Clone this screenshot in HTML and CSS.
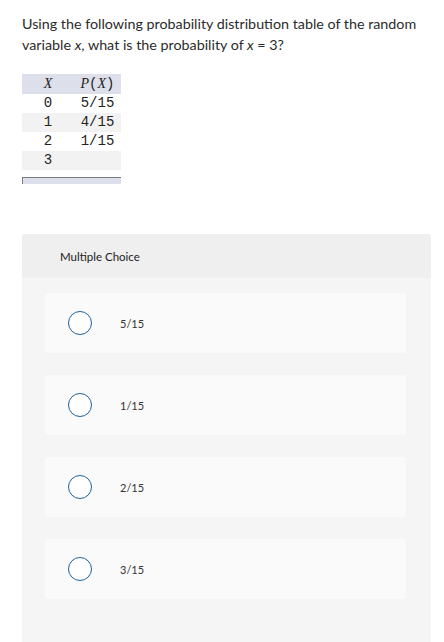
FILE: index.html
```html
<!DOCTYPE html>
<html>
<head>
<meta charset="utf-8">
<link rel="stylesheet" href="styles.css">
</head>
<body>
<div class="page">
  <p class="question">Using the following probability distribution table of the random variable <i>x</i>, what is the probability of <i>x</i>&nbsp;=&nbsp;3?</p>
  <div class="table-wrap">
    <table class="dist">
      <thead>
        <tr><th class="c1"><i>X</i></th><th class="c2"><i>P</i>(<i>X</i>)</th></tr>
      </thead>
      <tbody>
        <tr><td>0</td><td>5/15</td></tr>
        <tr class="alt"><td>1</td><td>4/15</td></tr>
        <tr><td>2</td><td>1/15</td></tr>
        <tr class="alt"><td>3</td><td></td></tr>
      </tbody>
    </table>
    <div class="scrollbar"></div>
  </div>
  <div class="panel">
    <div class="panel-head">Multiple Choice</div>
    <div class="options">
      <div class="option"><span class="radio"></span><span class="label">5/15</span></div>
      <div class="option"><span class="radio"></span><span class="label">1/15</span></div>
      <div class="option"><span class="radio"></span><span class="label">2/15</span></div>
      <div class="option"><span class="radio"></span><span class="label">3/15</span></div>
    </div>
  </div>
</div>
</body>
</html>
```

FILE: styles.css
```css
html, body {
  margin: 0;
  padding: 0;
  background: #ffffff;
}
body {
  font-family: "Lato", "Liberation Sans", sans-serif;
  color: #333333;
}
.page {
  padding: 13px 13px 0 22px;
}
.question {
  margin: 0;
  font-size: 14.3px;
  line-height: 21px;
  color: #2b2b2b;
}
.table-wrap {
  margin-top: 19px;
  width: 99px;
}
.dist {
  border-collapse: collapse;
  width: 99px;
  font-family: "Liberation Mono", monospace;
  font-size: 14px;
  color: #222222;
}
.dist th, .dist td {
  height: 19px;
  padding: 0;
  text-align: center;
  font-weight: normal;
  line-height: 19px;
}
.dist thead tr {
  background: #dde0ea;
}
.dist th i {
  font-family: "Liberation Serif", serif;
  font-style: italic;
  font-size: 14px;
}
.dist .c1 { width: 52px; }
.dist .alt { background: #f2f2f2; }
.scrollbar {
  margin-top: 7px;
  height: 6px;
  background: #dde0ea;
  border-top: 1px solid #7a7a7a;
  border-left: 1px solid #7a7a7a;
}
.panel {
  margin-top: 50px;
  width: 409px;
  height: 420px;
  background: #f5f5f5;
  border-radius: 3px 3px 0 0;
}
.panel-head {
  height: 44px;
  background: #efefef;
  border-radius: 3px 3px 0 0;
  padding-left: 38px;
  display: flex;
  align-items: center;
  font-size: 11.5px;
  color: #222222;
}
.options {
  padding: 15px 25px 0 23px;
  display: flex;
  flex-direction: column;
  gap: 22px;
}
.option {
  height: 60px;
  background: #fafafa;
  border-radius: 3px;
  display: flex;
  align-items: center;
  padding-left: 23px;
}
.radio {
  width: 22px;
  height: 22px;
  border: 1.5px solid #1f5f99;
  border-radius: 50%;
  background: #ffffff;
}
.label {
  margin-left: 28px;
  font-size: 11px;
  color: #333333;
}
```
